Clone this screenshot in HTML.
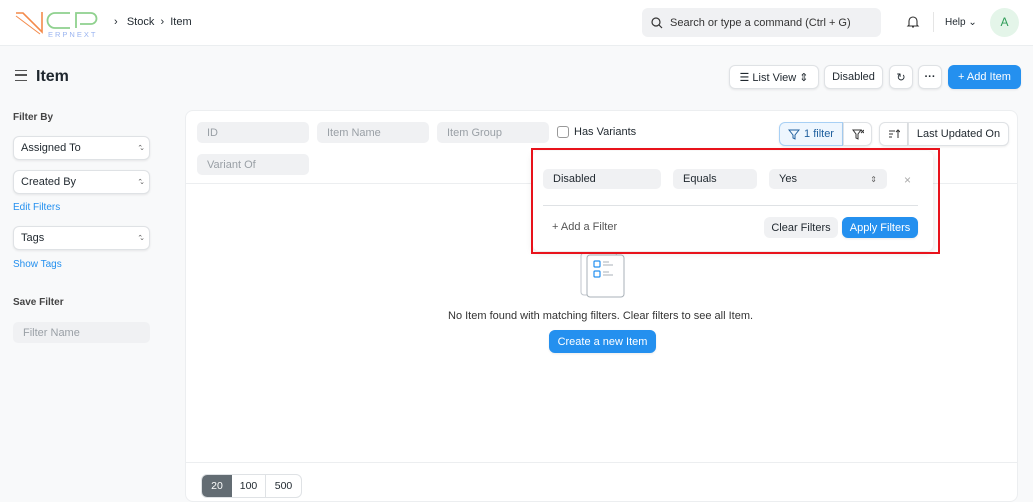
<!DOCTYPE html>
<html><head><style>
*{box-sizing:border-box;margin:0;padding:0}
body{width:1033px;height:502px;overflow:hidden;background:#f8f9fa;font-family:"Liberation Sans",sans-serif;font-size:11px;color:#1f272e;position:relative}
.a{position:absolute}
.nav{left:0;top:0;width:1033px;height:46px;background:#fff;border-bottom:1px solid #ebeef0}
.btn{position:absolute;background:#fff;border:1px solid #dfe2e5;border-radius:6px;box-shadow:0 1px 2px rgba(0,0,0,.08);font-size:11px;display:flex;align-items:center;justify-content:center}
.inp{position:absolute;background:#f0f1f3;border-radius:5px;color:#9aa0a6;font-size:11px;padding-left:10px;display:flex;align-items:center}
.sel{position:absolute;left:13px;width:137px;height:24px;background:#fff;border:1px solid #dfe2e5;border-radius:6px;box-shadow:0 1px 2px rgba(0,0,0,.08);padding-left:7px;display:flex;align-items:center;font-size:11px}
.sel:after{content:"⌃⌄";position:absolute;right:8px;font-size:7px;color:#555;letter-spacing:-4px}
.lnk{position:absolute;left:13px;color:#2490ef;font-size:10px}
.lbl{position:absolute;left:13px;color:#444;font-size:10px;font-weight:bold}
</style></head><body>
<div class="a nav">
 <svg class="a" style="left:14px;top:10px" width="90" height="28">
  <path d="M2 3 L9 3 L28 22 L28 2" stroke="#f48a4a" fill="none" stroke-width="1.6"/>
  <path d="M2 6 L26 24" stroke="#f48a4a" fill="none" stroke-width="1"/>
  <path d="M56 3 H41 a7.5 7.5 0 0 0 0 15 H56" stroke="#8fd18e" fill="none" stroke-width="1.8"/>
  <path d="M62 18 V3 H77 a5.5 5.5 0 0 1 0 11 H66" stroke="#8fd18e" fill="none" stroke-width="1.8"/>
  <text x="34" y="27" font-size="7.5" fill="#9ab4f0" font-family="Liberation Sans" letter-spacing="2">ERPNEXT</text>
 </svg>
 <div class="a" style="left:114px;top:16px;font-size:11px">›&nbsp;&nbsp; Stock &nbsp;›&nbsp; Item</div>
 <div class="a" style="left:642px;top:8px;width:239px;height:29px;background:#f0f1f3;border-radius:6px;font-size:11px;color:#333;padding:9px 0 0 28px">Search or type a command (Ctrl + G)</div>
 <svg class="a" style="left:651px;top:17px" width="12" height="12"><circle cx="5" cy="5" r="4" stroke="#333" fill="none" stroke-width="1.2"/><path d="M8 8 L11 11" stroke="#333" stroke-width="1.2"/></svg>
 <svg class="a" style="left:906px;top:15px" width="14" height="14"><path d="M3 10 V6 a4 4 0 0 1 8 0 V10 L12 11 H2 Z M6 12 h2" stroke="#333" fill="none" stroke-width="1.1"/></svg>
 <div class="a" style="left:933px;top:12px;width:1px;height:20px;background:#e5e5e5"></div>
 <div class="a" style="left:945px;top:17px;font-size:10px">Help ⌄</div>
 <div class="a" style="left:990px;top:8px;width:29px;height:29px;border-radius:50%;background:#e4f5e9;color:#2f9d58;text-align:center;line-height:29px;font-size:12px">A</div>
</div>
<div class="a" style="left:15px;top:70px;width:12px;height:11px;border-top:1.5px solid #555;border-bottom:1.5px solid #555"><div style="margin-top:3px;height:1.5px;background:#555"></div></div>
<div class="a" style="left:36px;top:68px;font-size:16px;font-weight:bold">Item</div>
<div class="btn" style="left:729px;top:65px;width:90px;height:24px">☰&nbsp;List View ⇕</div>
<div class="btn" style="left:824px;top:65px;width:59px;height:24px">Disabled</div>
<div class="btn" style="left:889px;top:65px;width:24px;height:24px">↻</div>
<div class="btn" style="left:918px;top:65px;width:24px;height:24px;font-weight:bold">···</div>
<div class="btn" style="left:948px;top:65px;width:73px;height:24px;background:#2490ef;color:#fff;border-color:#2490ef">+ Add Item</div>
<div class="lbl" style="top:112px">Filter By</div>
<div class="sel" style="top:136px">Assigned To</div>
<div class="sel" style="top:170px">Created By</div>
<div class="lnk" style="top:202px">Edit Filters</div>
<div class="sel" style="top:226px">Tags</div>
<div class="lnk" style="top:259px">Show Tags</div>
<div class="lbl" style="top:297px">Save Filter</div>
<div class="inp" style="left:13px;top:322px;width:137px;height:21px">Filter Name</div>
<div class="a" style="left:185px;top:110px;width:833px;height:392px;background:#fff;border:1px solid #eceef0;border-radius:8px"></div>
<div class="a" style="left:186px;top:183px;width:831px;height:1px;background:#eceef0"></div>
<div class="a" style="left:186px;top:462px;width:831px;height:1px;background:#eceef0"></div>
<div class="inp" style="left:197px;top:122px;width:112px;height:21px">ID</div>
<div class="inp" style="left:317px;top:122px;width:112px;height:21px">Item Name</div>
<div class="inp" style="left:437px;top:122px;width:112px;height:21px">Item Group</div>
<div class="a" style="left:557px;top:126px;width:12px;height:12px;border:1px solid #999;border-radius:3px"></div>
<div class="a" style="left:574px;top:126px">Has Variants</div>
<div class="inp" style="left:197px;top:154px;width:112px;height:21px">Variant Of</div>
<div class="btn" style="left:779px;top:122px;width:64px;height:24px;background:#eef6fe;border-color:#a8d0f5;color:#1f5f9e;border-radius:6px 0 0 6px"><svg width="12" height="12" style="margin-right:4px"><path d="M1 2 H11 L7 7 V11 L5 10 V7 Z" stroke="#1f5f9e" fill="none"/></svg>1 filter</div>
<div class="btn" style="left:843px;top:122px;width:29px;height:24px;border-radius:0 6px 6px 0"><svg width="12" height="12"><path d="M1 2 H9 L6 6 V11 L4 10 V6 Z M9 2 l3 3 M12 2 l-3 3" stroke="#333" fill="none"/></svg></div>
<div class="btn" style="left:879px;top:122px;width:29px;height:24px;border-radius:6px 0 0 6px"><svg width="12" height="12"><path d="M1 3 H7 M1 6 H5 M1 9 H4 M10 10 V2 M8 4 L10 2 L12 4" stroke="#333" fill="none"/></svg></div>
<div class="btn" style="left:908px;top:122px;width:101px;height:24px;border-radius:0 6px 6px 0">Last Updated On</div>
<svg class="a" style="left:580px;top:250px" width="48" height="48"><rect x="1" y="3" width="36" height="42" rx="3" fill="#fff" stroke="#c0c6cc"/><rect x="7" y="5" width="37" height="42" rx="3" fill="#fff" stroke="#a9b1b8"/><rect x="14" y="11" width="6" height="6" rx="1" fill="none" stroke="#2490ef" stroke-width="1.2"/><rect x="14" y="21" width="6" height="6" rx="1" fill="none" stroke="#2490ef" stroke-width="1.2"/><path d="M23 12h6M23 15h10M23 22h6M23 25h10" stroke="#a9b1b8"/></svg>
<div class="a" style="left:448px;top:310px;color:#333">No Item found with matching filters. Clear filters to see all Item.</div>
<div class="btn" style="left:549px;top:330px;width:107px;height:23px;background:#2490ef;color:#fff;border-color:#2490ef">Create a new Item</div>
<div class="a" style="left:201px;top:474px;width:101px;height:24px;border:1px solid #dfe2e5;border-radius:6px;display:flex;overflow:hidden;font-size:10.5px">
 <div style="width:30px;background:#636c73;color:#fff;text-align:center;line-height:22px">20</div>
 <div style="width:34px;text-align:center;line-height:22px;border-right:1px solid #dfe2e5">100</div>
 <div style="flex:1;text-align:center;line-height:22px">500</div>
</div>
<div class="a" style="left:533px;top:151px;width:400px;height:100px;background:#fff;border-radius:6px;box-shadow:0 2px 8px rgba(0,0,0,.12)"></div>
<div class="a" style="left:531px;top:148px;width:409px;height:106px;border:2px solid #e8121b"></div>
<div class="inp" style="left:543px;top:169px;width:118px;height:20px;color:#1f272e">Disabled</div>
<div class="inp" style="left:673px;top:169px;width:84px;height:20px;color:#1f272e">Equals</div>
<div class="inp" style="left:769px;top:169px;width:118px;height:20px;color:#1f272e">Yes<span style="position:absolute;right:10px;font-size:8px;color:#666">⇕</span></div>
<div class="a" style="left:904px;top:173px;color:#aaa;font-size:12px">×</div>
<div class="a" style="left:543px;top:205px;width:375px;height:1px;background:#dfe2e5"></div>
<div class="a" style="left:552px;top:221px;color:#555">+ Add a Filter</div>
<div class="btn" style="left:764px;top:217px;width:74px;height:21px;background:#f0f1f3;border:none;box-shadow:none">Clear Filters</div>
<div class="btn" style="left:842px;top:217px;width:76px;height:21px;background:#2490ef;color:#fff;border-color:#2490ef">Apply Filters</div>
</body></html>
